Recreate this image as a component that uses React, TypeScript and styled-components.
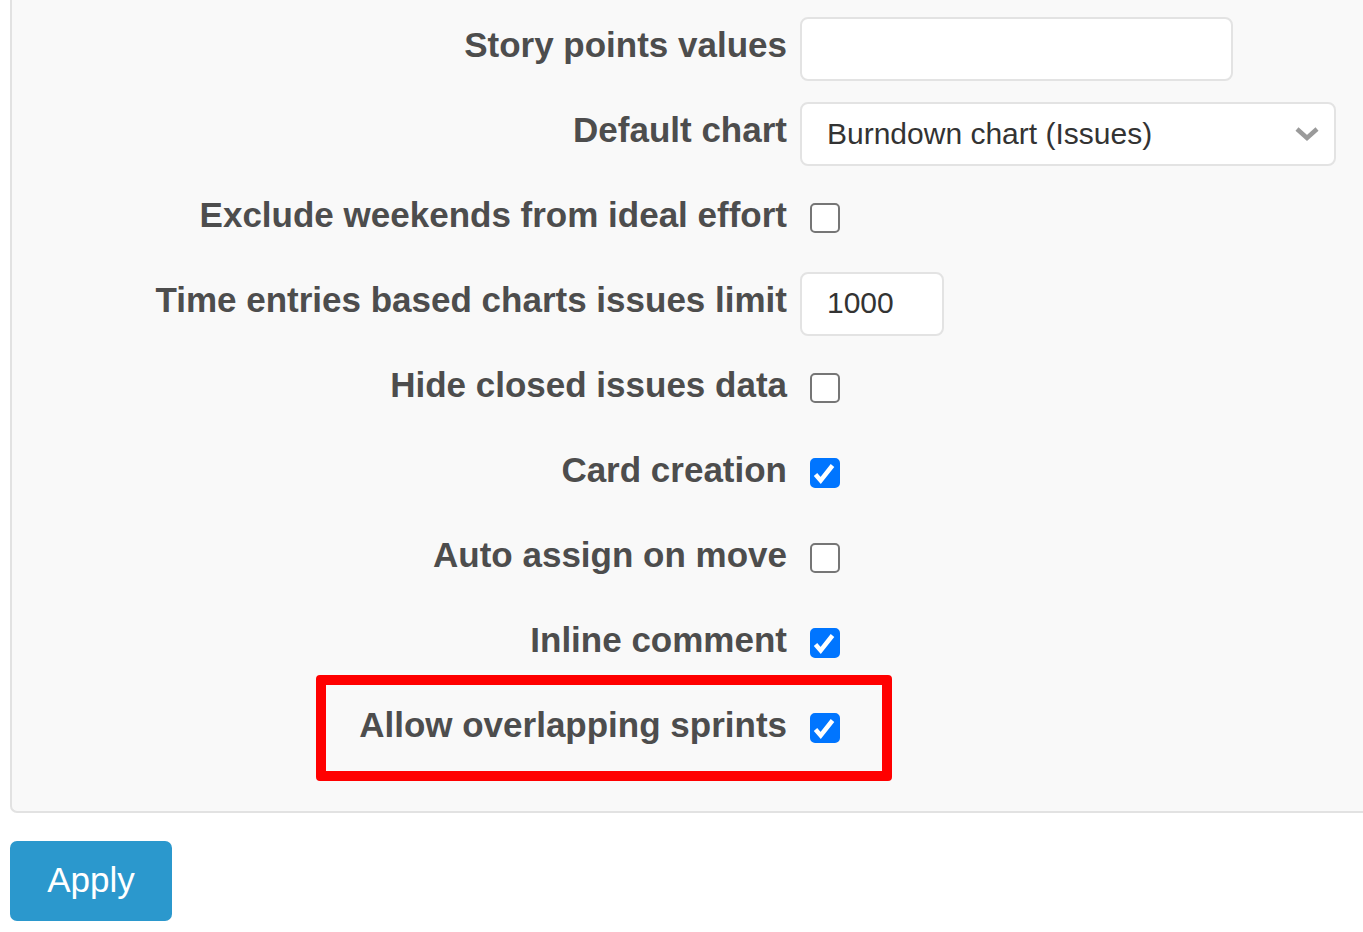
import styled, { createGlobalStyle } from 'styled-components';

const GlobalStyle = createGlobalStyle`
  html, body {
    margin: 0;
    padding: 0;
    background: #fff;
    overflow: hidden;
  }
  body {
    font-family: "Liberation Sans", Arial, sans-serif;
    color: #484848;
  }
`;

const Page = styled.div`
  padding: 0 0 0 10px;
`;

const Panel = styled.div`
  background: #f9f9f9;
  border-left: 2px solid #e2e2e2;
  border-bottom: 2px solid #e2e2e2;
  border-bottom-left-radius: 7px;
  margin-right: -30px;
  padding: 6px 0 40px;
`;

const Row = styled.div`
  position: relative;
  display: grid;
  grid-template-columns: 775px 1fr;
  column-gap: 13px;
  align-items: center;
  height: 85px;
`;

const Label = styled.label`
  text-align: right;
  font-size: 35px;
  font-weight: bold;
  color: #4d4d4d;
  white-space: nowrap;
  padding-bottom: 7px;
`;

const TextInput = styled.input<{ $w: number }>`
  display: block;
  box-sizing: border-box;
  width: ${(p) => p.$w}px;
  height: 64px;
  border: 2px solid #e3e3e3;
  border-radius: 8px;
  background: #fff;
  padding: 0 0 2px 25px;
  font-family: "Liberation Sans", Arial, sans-serif;
  font-size: 30px;
  color: #333;
  outline: none;
`;

const SelectBox = styled.div`
  box-sizing: border-box;
  width: 536px;
  height: 64px;
  border: 2px solid #e3e3e3;
  border-radius: 8px;
  background: #fff;
  padding: 0 14px 0 25px;
  display: flex;
  align-items: center;
  justify-content: space-between;
  font-size: 30px;
  color: #333;
`;

const CheckBox = styled.span<{ $checked: boolean }>`
  box-sizing: border-box;
  display: flex;
  align-items: center;
  justify-content: center;
  width: 30px;
  height: 30px;
  margin: 0 0 1px 10px;
  border-radius: 5px;
  border: 2px solid ${(p) => (p.$checked ? '#0075ff' : '#767676')};
  background: ${(p) => (p.$checked ? '#0075ff' : '#fff')};
`;

const Highlight = styled.div`
  position: absolute;
  left: 304px;
  top: -11px;
  width: 576px;
  height: 106px;
  box-sizing: border-box;
  border: 10px solid #ff0000;
  border-radius: 4px;
  pointer-events: none;
`;

const ApplyButton = styled.button`
  margin-top: 28px;
  width: 162px;
  height: 80px;
  border: none;
  border-radius: 7px;
  background: #2b98cd;
  color: #fff;
  font-family: "Liberation Sans", Arial, sans-serif;
  font-size: 35px;
  padding: 0 0 2px;
`;

const Chevron = () => (
  <svg width="26" height="16" viewBox="0 0 26 16">
    <polyline points="3,3 13,12 23,3" fill="none" stroke="#9a9a9a" strokeWidth="4.5" />
  </svg>
);

const Check = ({ checked }: { checked: boolean }) => (
  <CheckBox $checked={checked}>
    {checked && (
      <svg width="26" height="26" viewBox="0 0 26 26">
        <polyline points="3.5,14.5 8.7,20.5 20.5,5.5" fill="none" stroke="#fff" strokeWidth="4.5" />
      </svg>
    )}
  </CheckBox>
);

const checkRows: { label: string; checked: boolean; highlight?: boolean }[] = [
  { label: 'Hide closed issues data', checked: false },
  { label: 'Card creation', checked: true },
  { label: 'Auto assign on move', checked: false },
  { label: 'Inline comment', checked: true },
  { label: 'Allow overlapping sprints', checked: true, highlight: true },
];

export default function App() {
  return (
    <Page>
      <GlobalStyle />
      <Panel>
        <Row>
          <Label>Story points values</Label>
          <div>
            <TextInput $w={433} defaultValue="" />
          </div>
        </Row>
        <Row>
          <Label>Default chart</Label>
          <div>
            <SelectBox>
              <span>Burndown chart (Issues)</span>
              <Chevron />
            </SelectBox>
          </div>
        </Row>
        <Row>
          <Label>Exclude weekends from ideal effort</Label>
          <Check checked={false} />
        </Row>
        <Row>
          <Label>Time entries based charts issues limit</Label>
          <div>
            <TextInput $w={144} defaultValue="1000" />
          </div>
        </Row>
        {checkRows.map((r) => (
          <Row key={r.label}>
            {r.highlight && <Highlight />}
            <Label>{r.label}</Label>
            <Check checked={r.checked} />
          </Row>
        ))}
      </Panel>
      <ApplyButton>Apply</ApplyButton>
    </Page>
  );
}
